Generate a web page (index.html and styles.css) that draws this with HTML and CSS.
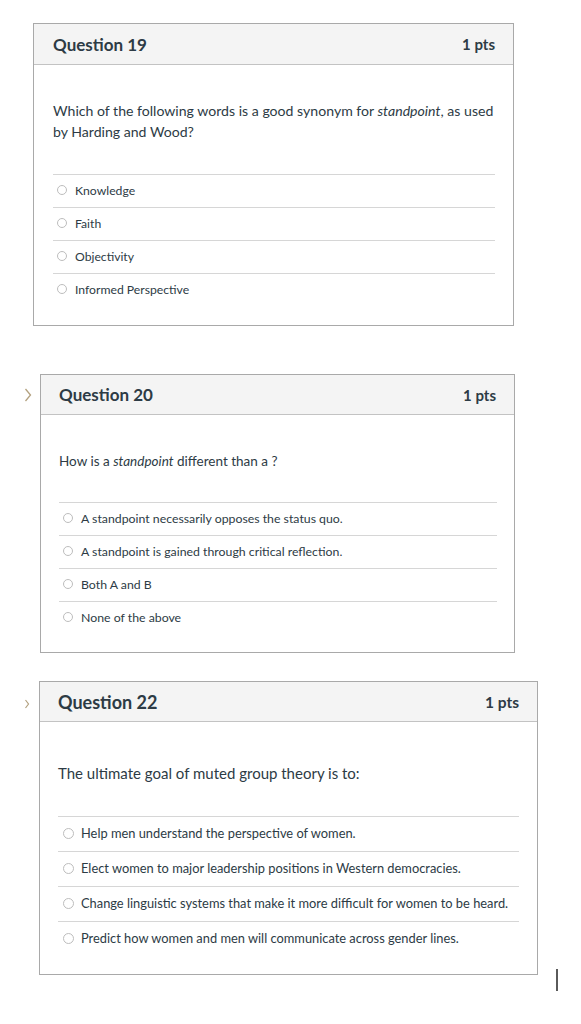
FILE: index.html
```html
<!DOCTYPE html>
<html lang="en">
<head>
<meta charset="utf-8">
<title>Quiz</title>
<link rel="stylesheet" href="styles.css">
</head>
<body>
<main class="quiz">
  <section class="qrow qrow-1">
    <div class="gutter"></div>
    <div class="card card-1">
      <header class="card-head">
        <h2 class="q-title">Question 19</h2>
        <span class="q-pts">1 pts</span>
      </header>
      <div class="card-body">
        <p class="q-text">Which of the following words is a good synonym for <em>standpoint</em>, as used by Harding and Wood?</p>
        <ul class="answers">
          <li class="answer"><span class="radio"></span><span>Knowledge</span></li>
          <li class="answer"><span class="radio"></span><span>Faith</span></li>
          <li class="answer"><span class="radio"></span><span>Objectivity</span></li>
          <li class="answer"><span class="radio"></span><span>Informed Perspective</span></li>
        </ul>
      </div>
    </div>
  </section>

  <section class="qrow qrow-2">
    <div class="gutter">
      <svg class="chev" width="8" height="14" viewBox="0 0 8 14"><path d="M1.5 1 L6.5 7 L1.5 13" fill="none" stroke="#b3a17f" stroke-width="1.3"/></svg>
    </div>
    <div class="card card-2">
      <header class="card-head">
        <h2 class="q-title">Question 20</h2>
        <span class="q-pts">1 pts</span>
      </header>
      <div class="card-body">
        <p class="q-text">How is a <em>standpoint</em> different than a ?</p>
        <ul class="answers">
          <li class="answer"><span class="radio"></span><span>A standpoint necessarily opposes the status quo.</span></li>
          <li class="answer"><span class="radio"></span><span>A standpoint is gained through critical reflection.</span></li>
          <li class="answer"><span class="radio"></span><span>Both A and B</span></li>
          <li class="answer"><span class="radio"></span><span>None of the above</span></li>
        </ul>
      </div>
    </div>
  </section>

  <section class="qrow qrow-3">
    <div class="gutter">
      <svg class="chev" width="6" height="10" viewBox="0 0 6 10"><path d="M1.5 1 L4.5 5 L1.5 9" fill="none" stroke="#b3a17f" stroke-width="1.2"/></svg>
    </div>
    <div class="card card-3">
      <header class="card-head">
        <h2 class="q-title">Question 22</h2>
        <span class="q-pts">1 pts</span>
      </header>
      <div class="card-body">
        <p class="q-text">The ultimate goal of muted group theory is to:</p>
        <ul class="answers">
          <li class="answer"><span class="radio"></span><span>Help men understand the perspective of women.</span></li>
          <li class="answer"><span class="radio"></span><span>Elect women to major leadership positions in Western democracies.</span></li>
          <li class="answer"><span class="radio"></span><span>Change linguistic systems that make it more difficult for women to be heard.</span></li>
          <li class="answer"><span class="radio"></span><span>Predict how women and men will communicate across gender lines.</span></li>
        </ul>
      </div>
      <span class="caret"></span>
    </div>
  </section>
</main>
</body>
</html>
```

FILE: styles.css
```css
* { box-sizing: border-box; }
html, body { margin: 0; padding: 0; background: #ffffff; }
body {
  font-family: Lato, "Open Sans", "Liberation Sans", sans-serif;
  color: #2d3b45;
  width: 581px;
  height: 1024px;
  overflow: hidden;
}
.quiz { display: flex; flex-direction: column; }

.qrow { display: flex; align-items: flex-start; }
.qrow-1 { margin-top: 23px; }
.qrow-2 { margin-top: 48px; }
.qrow-3 { margin-top: 28px; }

.gutter { flex: none; display: flex; }
.qrow-1 .gutter { width: 33px; }
.qrow-2 .gutter { width: 40px; padding: 14px 0 0 24px; }
.qrow-3 .gutter { width: 39px; padding: 18px 0 0 24px; }

.card {
  position: relative;
  border: 1px solid #a9a9a9;
  background: #fff;
}
.card-1 { width: 481px; }
.card-2 { width: 475px; }
.card-3 { width: 499px; }

.card-head {
  display: flex;
  align-items: center;
  justify-content: space-between;
  background: #f4f4f4;
  border-bottom: 1px solid #c3c3c3;
  padding: 0 18px 0 19px;
  height: 41px;
}
.card-2 .card-head, .card-3 .card-head { height: 40px; padding-left: 18px; }

.q-title { margin: 0; font-size: 17px; font-weight: 700; color: #2d3b45; }
.q-pts { font-size: 15px; font-weight: 700; color: #2d3b45; }
.card-3 .q-title { font-size: 18px; }
.card-3 .q-pts { font-size: 15.5px; }

.card-body { padding: 35px 18px 19px 19px; }
.card-2 .card-body { padding: 36px 17px 18px 18px; }
.card-3 .card-body { padding: 40px 18px 18px 18px; }

.q-text { margin: 0 0 32px; font-size: 14.1px; line-height: 21px; }
.card-2 .q-text { font-size: 13.5px; line-height: 20px; margin-bottom: 31px; }
.card-3 .q-text { font-size: 15px; line-height: 22px; margin-bottom: 32px; }

.answers { list-style: none; margin: 0; padding: 0; }
.answer {
  display: flex;
  align-items: center;
  border-top: 1px solid #d6d6d6;
  height: 33px;
  padding: 0 0 2px 4px;
  font-size: 12.2px;
  color: #2d3b45;
}
.card-2 .answer { padding-left: 4px; font-size: 12.3px; }
.card-3 .answer { height: 35px; font-size: 12.85px; padding-left: 5px; }

.radio {
  flex: none;
  width: 10px;
  height: 10px;
  border: 1px solid #bdbdbd;
  border-radius: 50%;
  margin-right: 8px;
  background: #fff;
}
.card-3 .radio { width: 11px; height: 11px; margin-right: 7px; }

.caret {
  position: absolute;
  right: -21px;
  bottom: -17px;
  width: 2px;
  height: 22px;
  background: #5a5a5a;
}
```
